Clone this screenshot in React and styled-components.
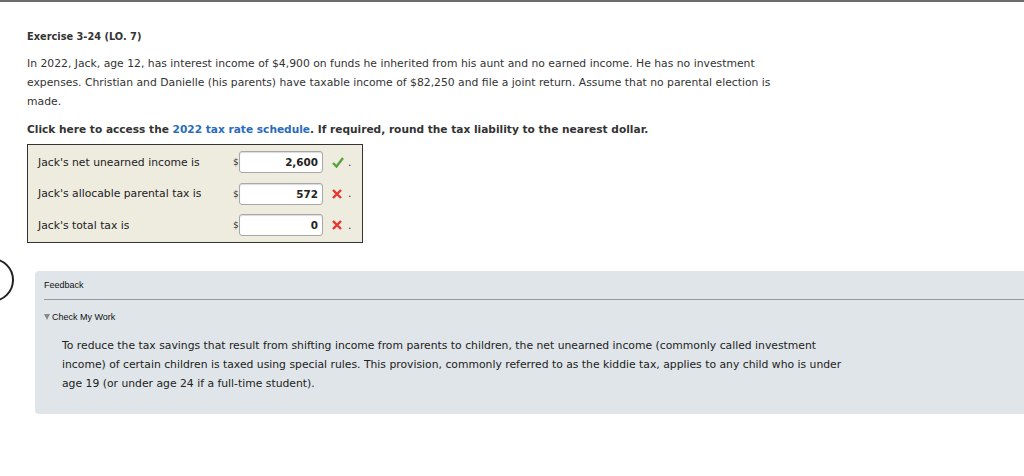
import React from "react";
import styled, { createGlobalStyle } from "styled-components";

const GlobalStyle = createGlobalStyle`
  html, body {
    margin: 0;
    padding: 0;
    background: #fff;
    overflow: hidden;
  }
  body {
    font-family: "DejaVu Sans", Verdana, sans-serif;
    color: #333;
  }
`;

const Page = styled.div`
  position: relative;
  width: 1024px;
  height: 476px;
  border-top: 2px solid #6b6b6b;
  box-sizing: border-box;
  overflow: hidden;
`;

const Content = styled.div`
  padding: 27px 0 0 27px;
  font-size: 10.8px;
`;

const Title = styled.h3`
  margin: 0 0 9px;
  font-size: 9.8px;
  font-weight: bold;
  line-height: 16px;
`;

const Para = styled.p`
  margin: 0 0 10px;
  width: 760px;
  line-height: 19px;
`;

const Instr = styled.p`
  margin: 0 0 7px;
  font-size: 10.6px;
  font-weight: bold;
  line-height: 16px;
`;

const Link = styled.a`
  color: #2a6cbb;
  text-decoration: none;
`;

const AnswerBox = styled.div`
  width: 336px;
  box-sizing: border-box;
  border: 1px solid #333;
  background: #eeebdf;
  padding: 6px 0 6px 10px;
  display: flex;
  flex-direction: column;
  gap: 9.5px;
`;

const Row = styled.div`
  display: flex;
  align-items: center;
  height: 22px;
`;

const Label = styled.span`
  width: 195px;
  color: #222;
`;

const Dollar = styled.span`
  width: 6px;
  font-size: 9px;
  color: #333;
`;

const Field = styled.div`
  width: 84px;
  height: 22px;
  box-sizing: border-box;
  border: 1px solid #a8a8a8;
  border-radius: 3px;
  background: #fff;
  box-shadow: inset 0 1px 1px rgba(0, 0, 0, 0.15);
  text-align: right;
  padding: 0 4px;
  line-height: 20px;
  font-size: 10.4px;
  font-weight: bold;
  color: #222;
`;

const Mark = styled.span`
  width: 16px;
  margin-left: 9px;
  display: flex;
  align-items: center;
`;

const Dot = styled.span`
  color: #333;
`;

const Circle = styled.div`
  position: absolute;
  left: -30px;
  top: 256px;
  width: 40px;
  height: 40px;
  border: 2px solid #222;
  border-radius: 50%;
`;

const Feedback = styled.div`
  margin: 28px 0 0 8px;
  background: #dfe5e8;
  border-radius: 4px 0 0 4px;
  padding: 8px 0 21px 9px;
  width: 1000px;
`;

const FeedHead = styled.div`
  font-family: "Liberation Sans", Arial, sans-serif;
  font-size: 9px;
  color: #111;
  padding: 1px 0 9px;
  border-bottom: 1px solid #999;
`;

const Toggle = styled.div`
  display: flex;
  align-items: center;
  gap: 2px;
  margin-top: 12px;
  font-family: "Liberation Sans", Arial, sans-serif;
  font-size: 9px;
  color: #111;
`;

const FeedText = styled.p`
  margin: 14px 0 0 18px;
  line-height: 19px;
  color: #222;
`;

const rows = [
  { label: "Jack's net unearned income is", value: "2,600", ok: true },
  { label: "Jack's allocable parental tax is", value: "572", ok: false },
  { label: "Jack's total tax is", value: "0", ok: false },
];

const App = () => {
  return (
    <>
      <GlobalStyle />
      <Page>
        <Circle />
        <Content>
          <Title>Exercise 3-24 (LO. 7)</Title>
          <Para>
            In 2022, Jack, age 12, has interest income of $4,900 on funds he
            inherited from his aunt and no earned income. He has no investment
            <br />
            expenses. Christian and Danielle (his parents) have taxable income
            of $82,250 and file a joint return. Assume that no parental
            election is
            <br />
            made.
          </Para>
          <Instr>
            Click here to access the <Link>2022 tax rate schedule</Link>. If
            required, round the tax liability to the nearest dollar.
          </Instr>
          <AnswerBox>
            {rows.map((r) => (
              <Row key={r.label}>
                <Label>{r.label}</Label>
                <Dollar>$</Dollar>
                <Field>{r.value}</Field>
                <Mark>
                  {r.ok ? (
                    <svg width="12" height="11" viewBox="0 0 12 11">
                      <path
                        d="M1 6 L4.5 9.5 L11 1"
                        fill="none"
                        stroke="#5aa13f"
                        strokeWidth="2.4"
                      />
                    </svg>
                  ) : (
                    <svg width="10" height="10" viewBox="0 0 10 10">
                      <path
                        d="M1 1 L9 9 M9 1 L1 9"
                        fill="none"
                        stroke="#e8362d"
                        strokeWidth="2.4"
                      />
                    </svg>
                  )}
                </Mark>
                <Dot>.</Dot>
              </Row>
            ))}
          </AnswerBox>
          <Feedback>
            <FeedHead>Feedback</FeedHead>
            <Toggle>
              <svg width="6" height="6" viewBox="0 0 6 6">
                <path d="M0 0 H6 L3 6 Z" fill="#888" />
              </svg>
              Check My Work
            </Toggle>
            <FeedText>
              To reduce the tax savings that result from shifting income from
              parents to children, the net unearned income (commonly called
              investment
              <br />
              income) of certain children is taxed using special rules. This
              provision, commonly referred to as the kiddie tax, applies to any
              child who is under
              <br />
              age 19 (or under age 24 if a full-time student).
            </FeedText>
          </Feedback>
        </Content>
      </Page>
    </>
  );
};

export default App;
